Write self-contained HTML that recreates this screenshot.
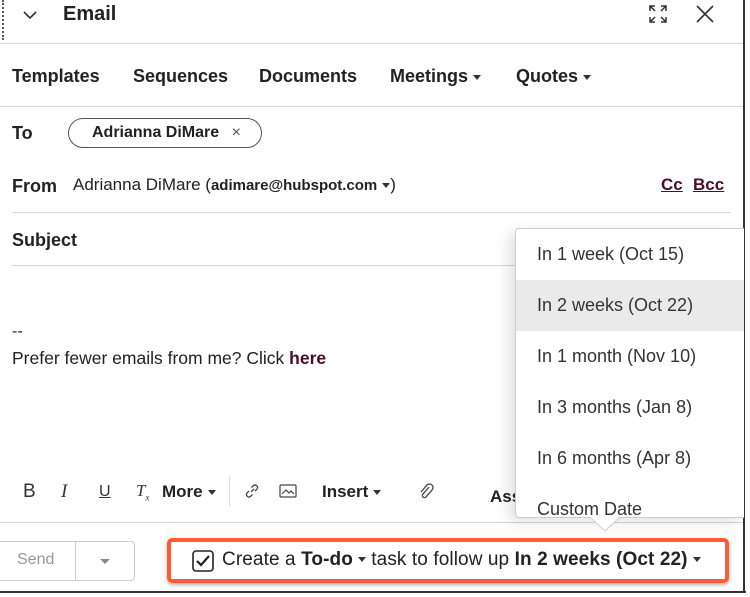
<!DOCTYPE html>
<html><head><style>
*{margin:0;padding:0;box-sizing:border-box}
body{width:750px;height:597px;background:#fff;font-family:"Liberation Sans",sans-serif;color:#222;position:relative;overflow:hidden}
.a{position:absolute;white-space:nowrap}
.b{font-weight:bold}
.line{position:absolute;background:#d6d6d6;height:1px}
.tri{display:inline-block;width:0;height:0;border-left:4px solid transparent;border-right:4px solid transparent;border-top:5px solid #333;vertical-align:middle;margin-left:5px}
.dd div{height:51px;line-height:51px;padding-left:21px;font-size:18px;color:#333}
</style></head><body>
<div class="a" style="left:2px;top:0;height:40px;border-left:2px dotted #555"></div>
<svg class="a" style="left:22px;top:9px" width="16" height="12"><path d="M2 3l6 6 6-6" fill="none" stroke="#333" stroke-width="1.6"/></svg>
<div class="a b" style="left:63px;top:3px;font-size:20px">Email</div>
<svg class="a" style="left:648px;top:4px" width="20" height="20" fill="none" stroke="#333" stroke-width="1.5"><path d="M2 7V2h5M2 2l5 5M13 2h5v5M18 2l-5 5M2 13v5h5M2 18l5-5M18 13v5h-5M18 18l-5-5"/></svg>
<svg class="a" style="left:695px;top:4px" width="20" height="20"><path d="M2 2l16 16M18 2L2 18" stroke="#333" stroke-width="1.6"/></svg>
<div class="line" style="left:0;top:43px;width:744px"></div>
<div class="a b" style="left:12px;top:66px;font-size:18px">Templates</div>
<div class="a b" style="left:133px;top:66px;font-size:18px">Sequences</div>
<div class="a b" style="left:259px;top:66px;font-size:18px">Documents</div>
<div class="a b" style="left:390px;top:66px;font-size:18px">Meetings<span class="tri"></span></div>
<div class="a b" style="left:516px;top:66px;font-size:18px">Quotes<span class="tri"></span></div>
<div class="line" style="left:0;top:106px;width:744px"></div>
<div class="a b" style="left:12px;top:123px;font-size:18px">To</div>
<div class="a b" style="left:68px;top:118px;width:194px;height:30px;border:1px solid #555;border-radius:15px;font-size:16px;line-height:28px;padding-left:23px">Adrianna DiMare <span style="font-weight:normal;color:#555;margin-left:8px">×</span></div>
<div class="a b" style="left:12px;top:176px;font-size:18px">From</div>
<div class="a" style="left:73px;top:175px;font-size:17px">Adrianna DiMare (<b style="font-size:15px">adimare@hubspot.com</b><span class="tri"></span>)</div>
<div class="a b" style="left:661px;top:175px;font-size:17px;color:#4a0d2e;text-decoration:underline">Cc</div>
<div class="a b" style="left:693px;top:175px;font-size:17px;color:#4a0d2e;text-decoration:underline">Bcc</div>
<div class="line" style="left:12px;top:212px;width:718px"></div>
<div class="a b" style="left:12px;top:230px;font-size:18px">Subject</div>
<div class="line" style="left:12px;top:265px;width:505px"></div>
<div class="a" style="left:12px;top:323px;font-size:16px">--</div>
<div class="a" style="left:12px;top:348px;font-size:17.5px">Prefer fewer emails from me? Click <b style="color:#4a0d2e">here</b></div>
<div class="a" style="left:23px;top:481px;font-size:19px;color:#333">B</div>
<div class="a" style="left:61px;top:481px;font-size:19px;font-style:italic;color:#333;font-family:'Liberation Serif',serif">I</div>
<div class="a" style="left:99px;top:483px;font-size:16px;text-decoration:underline;color:#333">U</div>
<div class="a" style="left:136px;top:481px;font-size:17px;font-style:italic;color:#333;font-family:'Liberation Serif',serif">T<sub style="font-size:9px">x</sub></div>
<div class="a b" style="left:162px;top:482px;font-size:17px">More<span class="tri"></span></div>
<div class="a" style="left:229px;top:476px;width:1px;height:30px;background:#ddd"></div>
<svg class="a" style="left:244px;top:483px" width="16" height="16" fill="none" stroke="#444" stroke-width="1.3"><path d="M7 9l3-3M5 8l-2 2a2.5 2.5 0 0 0 3.5 3.5l2-2M11 8l2-2a2.5 2.5 0 0 0-3.5-3.5l-2 2"/></svg>
<svg class="a" style="left:279px;top:484px" width="18" height="15" fill="none" stroke="#444" stroke-width="1.2"><rect x="1" y="1" width="16" height="12" rx="1"/><path d="M3 10l4-4 3 3 2-2 3 3"/></svg>
<div class="a b" style="left:322px;top:482px;font-size:17px">Insert<span class="tri"></span></div>
<svg class="a" style="left:418px;top:482px" width="16" height="18" fill="none" stroke="#444" stroke-width="1.3"><path d="M11 5l-6 7a2 2 0 0 0 3 3l6-7a3.5 3.5 0 0 0-5-5l-6 7"/></svg>
<div class="a b" style="left:490px;top:487px;font-size:17px">Ass</div>
<div class="line" style="left:0;top:522px;width:744px"></div>
<div class="a" style="left:-5px;top:541px;width:140px;height:40px;border:1px solid #ccc;border-radius:4px"></div>
<div class="a" style="left:75px;top:541px;width:1px;height:40px;background:#ccc"></div>
<div class="a" style="left:17px;top:551px;font-size:16px;color:#999">Send</div>
<div class="a" style="left:100px;top:559px;border-left:5px solid transparent;border-right:5px solid transparent;border-top:5px solid #888"></div>
<div class="a" style="left:167px;top:538px;width:562px;height:45px;border:4px solid #ff5c35;border-radius:5px;box-shadow:0 2px 4px rgba(0,0,0,.3)"></div>
<svg class="a" style="left:192px;top:550px" width="22" height="22" fill="none" stroke="#222" stroke-width="1.6"><rect x="1" y="1" width="20" height="20" rx="3"/><path d="M5 11l4 4 8-9" stroke-width="2.2"/></svg>
<div class="a" style="left:222px;top:549px;font-size:19px;color:#222;letter-spacing:0.1px">Create a <b>To-do</b><span class="tri"></span> task to follow up <b>In 2 weeks (Oct 22)</b><span class="tri"></span></div>
<div class="a" style="left:0;top:591px;width:746px;height:2px;background:#333"></div>
<div class="a" style="left:743px;top:0;width:2px;height:593px;background:#333"></div>
<div class="a dd" style="left:515px;top:228px;width:229px;height:290px;background:#fff;border:1px solid #ccc;border-right:none;border-radius:4px 0 0 4px;box-shadow:-6px 4px 14px rgba(0,0,0,.12);overflow:hidden">
<div>In 1 week (Oct 15)</div>
<div style="background:#eaeaea">In 2 weeks (Oct 22)</div>
<div>In 1 month (Nov 10)</div>
<div>In 3 months (Jan 8)</div>
<div>In 6 months (Apr 8)</div>
<div>Custom Date</div>
</div>
<svg class="a" style="left:590px;top:517px" width="30" height="16"><path d="M0 0L15 14L30 0" fill="#fff" stroke="#ccc"/></svg>
</body></html>
